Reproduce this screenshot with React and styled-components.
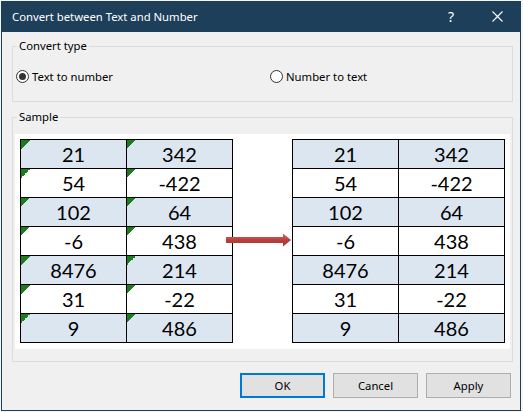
import React from "react";
import styled, { createGlobalStyle } from "styled-components";

const Global = createGlobalStyle`
  html, body { margin: 0; padding: 0; background: #f4f4f4; }
  body { font-family: "Noto Sans", "Open Sans", sans-serif; }
`;

const Dialog = styled.div`
  width: 520px;
  height: 410px;
  margin: 1px 0 0 1px;
  box-sizing: border-box;
  display: flex;
  flex-direction: column;
  background: #f0f0f0;
  border: 1px solid #1e3f5a;
  border-top: none;
`;

const TitleBar = styled.div`
  height: 31px;
  flex: none;
  background: #1e3f5a;
  color: #fff;
  display: flex;
  align-items: center;
  padding-left: 10px;
  font-size: 11.3px;
`;

const Title = styled.div`
  flex: 1;
`;

const CapBtn = styled.div`
  width: 46px;
  height: 31px;
  display: flex;
  align-items: center;
  justify-content: center;
  color: #fff;
  font-size: 14px;
`;

const Body = styled.div`
  flex: 1;
  display: flex;
  flex-direction: column;
  padding: 7px 7px 0 10px;
  gap: 8px;
  font-size: 11.3px;
  color: #000;
`;

const Group = styled.fieldset`
  margin: 0;
  padding: 0;
  border: 1px solid #dcdcdc;
  min-width: 0;
  height: ${(p) => p.$h}px;
  box-sizing: border-box;
  flex: none;
`;

const Legend = styled.legend`
  margin-left: 4px;
  padding: 0 2px;
  font-size: 11.3px;
  line-height: 14px;
`;

const RadioRow = styled.div`
  display: grid;
  grid-template-columns: 254px 1fr;
  align-items: center;
  padding: 16px 0 0 3px;
`;

const RadioItem = styled.label`
  display: flex;
  align-items: center;
  gap: 3px;
`;

const RadioCircle = styled.span`
  width: 13px;
  height: 13px;
  box-sizing: border-box;
  border: 1px solid #333;
  border-radius: 50%;
  background: #fff;
  display: flex;
  align-items: center;
  justify-content: center;
  &::after {
    content: "";
    width: 7px;
    height: 7px;
    border-radius: 50%;
    background: ${(p) => (p.$on ? "#333" : "transparent")};
  }
`;

const SampleArea = styled.div`
  position: relative;
  background: #fff;
  padding: 5px 5px 6px;
  display: flex;
  justify-content: space-between;
  margin: 10px 2px 0;
`;

const Table = styled.div`
  display: grid;
  grid-template-columns: 106px 106px;
  border-top: 1px solid #000;
  border-left: 1px solid #000;
`;

const Cell = styled.div`
  height: 29px;
  box-sizing: border-box;
  border-right: 1px solid #000;
  border-bottom: 1px solid #000;
  display: flex;
  align-items: center;
  justify-content: center;
  font-family: Lato, "Noto Sans", sans-serif;
  font-size: 20px;
  color: #000;
  background-color: ${(p) => (p.$shade ? "#dce6f1" : "#fff")};
  background-image: ${(p) =>
    p.$flag ? "linear-gradient(135deg, #1c7d1c 50%, transparent 50%)" : "none"};
  background-size: 9px 9px;
  background-repeat: no-repeat;
`;

const Arrow = styled.svg`
  position: absolute;
  left: 211px;
  top: 98px;
`;

const Buttons = styled.div`
  display: flex;
  justify-content: flex-end;
  gap: 8px;
  padding: 3px 2px 0 0;
`;

const Button = styled.div`
  width: 85px;
  height: 25px;
  box-sizing: border-box;
  background: #e1e1e1;
  border: ${(p) => (p.$primary ? "2px solid #0078d7" : "1px solid #adadad")};
  display: flex;
  align-items: center;
  justify-content: center;
  font-size: 11.3px;
`;

const data = [
  ["21", "342"],
  ["54", "-422"],
  ["102", "64"],
  ["-6", "438"],
  ["8476", "214"],
  ["31", "-22"],
  ["9", "486"],
];

function SampleTable({ flags }) {
  return (
    <Table>
      {data.map((row, i) =>
        row.map((v, j) => (
          <Cell key={`${i}-${j}`} $shade={i % 2 === 0} $flag={flags}>
            {v}
          </Cell>
        ))
      )}
    </Table>
  );
}

export default function App() {
  return (
    <>
      <Global />
      <Dialog>
        <TitleBar>
          <Title>Convert between Text and Number</Title>
          <CapBtn>?</CapBtn>
          <CapBtn>
            <svg width="11" height="11" viewBox="0 0 11 11">
              <path d="M0.5 0.5 L10.5 10.5 M10.5 0.5 L0.5 10.5" stroke="#fff" strokeWidth="1.1" />
            </svg>
          </CapBtn>
        </TitleBar>
        <Body>
          <Group $h={63}>
            <Legend>Convert type</Legend>
            <RadioRow>
              <RadioItem>
                <RadioCircle $on />
                Text to number
              </RadioItem>
              <RadioItem>
                <RadioCircle />
                Number to text
              </RadioItem>
            </RadioRow>
          </Group>
          <Group $h={252}>
            <Legend>Sample</Legend>
            <SampleArea>
              <SampleTable flags />
              <SampleTable />
              <Arrow width="66" height="16" viewBox="0 0 66 16">
                <defs>
                  <linearGradient id="ag" x1="0" y1="0" x2="0" y2="1">
                    <stop offset="0" stopColor="#d46a66" />
                    <stop offset="0.5" stopColor="#b8403c" />
                    <stop offset="1" stopColor="#a5322f" />
                  </linearGradient>
                </defs>
                <path d="M0 5 H57 V1.5 L65 8 L57 14.5 V11 H0 Z" fill="url(#ag)" />
              </Arrow>
            </SampleArea>
          </Group>
          <Buttons>
            <Button $primary>OK</Button>
            <Button>Cancel</Button>
            <Button>Apply</Button>
          </Buttons>
        </Body>
      </Dialog>
    </>
  );
}
